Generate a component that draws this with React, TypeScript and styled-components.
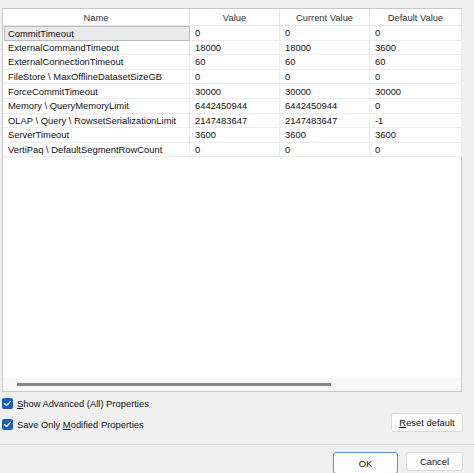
import styled, { createGlobalStyle } from "styled-components";

const GlobalStyle = createGlobalStyle`
  html, body {
    margin: 0;
    padding: 0;
    background: #f0f0f0;
  }
  body {
    font-family: "Liberation Sans", Arial, sans-serif;
  }
`;

const columns = ["Name", "Value", "Current Value", "Default Value"];
const widths = [187, 90, 90, 92];

const rows: string[][] = [
  ["CommitTimeout", "0", "0", "0"],
  ["ExternalCommandTimeout", "18000", "18000", "3600"],
  ["ExternalConnectionTimeout", "60", "60", "60"],
  ["FileStore \\ MaxOfflineDatasetSizeGB", "0", "0", "0"],
  ["ForceCommitTimeout", "30000", "30000", "30000"],
  ["Memory \\ QueryMemoryLimit", "6442450944", "6442450944", "0"],
  ["OLAP \\ Query \\ RowsetSerializationLimit", "2147483647", "2147483647", "-1"],
  ["ServerTimeout", "3600", "3600", "3600"],
  ["VertiPaq \\ DefaultSegmentRowCount", "0", "0", "0"],
];

export default function App() {
  return (
    <Page>
      <GlobalStyle />
      <GridPanel>
        <HeaderRow>
          {columns.map((c, i) => (
            <HeaderCell key={c} $w={widths[i]}>
              {c}
            </HeaderCell>
          ))}
        </HeaderRow>
        <Body>
          {rows.map((r, ri) => (
            <Row key={r[0]}>
              {r.map((v, ci) => (
                <Cell key={ci} $w={widths[ci]} $selected={ri === 0 && ci === 0}>
                  {v}
                </Cell>
              ))}
            </Row>
          ))}
        </Body>
        <ScrollTrack>
          <ScrollThumb />
        </ScrollTrack>
      </GridPanel>

      <Options>
        <Checks>
          <CheckRow>
            <CheckBox />
            <span>
              <u>S</u>how Advanced (All) Properties
            </span>
          </CheckRow>
          <CheckRow>
            <CheckBox />
            <span>
              Save Only <u>M</u>odified Properties
            </span>
          </CheckRow>
        </Checks>
        <Button $w={72}>
          <u>R</u>eset default
        </Button>
      </Options>

      <Footer>
        <Button $w={65} $primary>
          OK
        </Button>
        <Button $w={57}>Cancel</Button>
      </Footer>
    </Page>
  );
}

function CheckBox() {
  return (
    <Box>
      <svg width="9" height="9" viewBox="0 0 9 9">
        <path
          d="M1.6 4.7 L3.6 6.6 L7.4 2.4"
          fill="none"
          stroke="#fff"
          strokeWidth="1.4"
          strokeLinecap="round"
          strokeLinejoin="round"
        />
      </svg>
    </Box>
  );
}

const Page = styled.div`
  width: 474px;
  height: 473px;
  display: flex;
  flex-direction: column;
  overflow: hidden;
  padding-top: 8px;
  box-sizing: border-box;
  font-size: 9.4px;
  color: #111;
`;

const GridPanel = styled.div`
  margin-left: 2px;
  width: 460px;
  height: 384px;
  flex-shrink: 0;
  box-sizing: border-box;
  border: 1px solid #c8c8c8;
  background: #fff;
  display: flex;
  flex-direction: column;
`;

const HeaderRow = styled.div`
  display: flex;
  height: 16px;
  border-bottom: 1px solid #e4e4e4;
  color: #333;
`;

const HeaderCell = styled.div<{ $w: number }>`
  width: ${(p) => p.$w}px;
  flex-shrink: 0;
  box-sizing: border-box;
  border-right: 1px solid #e6e6e6;
  display: flex;
  align-items: center;
  justify-content: center;
  padding-top: 1px;
`;

const Body = styled.div`
  flex: 1;
`;

const Row = styled.div`
  display: flex;
  height: 14.6px;
`;

const Cell = styled.div<{ $w: number; $selected?: boolean }>`
  width: ${(p) => p.$w}px;
  flex-shrink: 0;
  box-sizing: border-box;
  display: flex;
  align-items: center;
  padding-left: 5px;
  white-space: nowrap;
  overflow: hidden;
  border-right: 1px solid #ececec;
  border-bottom: 1px solid #ececec;
  ${(p) =>
    p.$selected &&
    `
    margin-left: 1px;
    width: ${p.$w - 1}px;
    padding-left: 3px;
    background: #e9eaec;
    border: 1px solid #b9bcc0;
  `}
`;

const ScrollTrack = styled.div`
  height: 13px;
  background: #f7f7f7;
  display: flex;
  align-items: center;
  padding-left: 14px;
`;

const ScrollThumb = styled.div`
  width: 314px;
  height: 3px;
  background: #868686;
`;

const Options = styled.div`
  display: flex;
  justify-content: space-between;
  align-items: flex-end;
  height: 53px;
  flex-shrink: 0;
  box-sizing: border-box;
  padding: 6px 11px 12px 2px;
  border-bottom: 1px solid #d6d6d6;
`;

const Checks = styled.div`
  align-self: flex-start;
  display: flex;
  flex-direction: column;
  gap: 10px;
`;

const CheckRow = styled.div`
  display: flex;
  align-items: center;
  gap: 4px;
  height: 11px;
  u {
    text-decoration-thickness: 1px;
  }
`;

const Box = styled.div`
  width: 11px;
  height: 11px;
  border-radius: 2px;
  background: #1560b8;
  display: flex;
  align-items: center;
  justify-content: center;
`;

const Button = styled.div<{ $w: number; $primary?: boolean }>`
  width: ${(p) => p.$w}px;
  height: ${(p) => (p.$primary ? "22px" : "19px")};
  box-sizing: border-box;
  background: #fdfdfd;
  border: 1px solid ${(p) => (p.$primary ? "#5d8fc4" : "#dadada")};
  border-radius: 3px;
  display: flex;
  align-items: center;
  justify-content: center;
`;

const Footer = styled.div`
  display: flex;
  justify-content: flex-end;
  align-items: flex-start;
  gap: 8px;
  padding: 7px 11px 0 0;
`;
